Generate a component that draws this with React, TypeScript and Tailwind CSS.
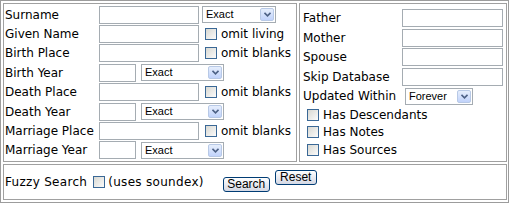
import React from 'react';

const font = { fontFamily: '"DejaVu Sans", Verdana, sans-serif' };
const smallFont = { fontFamily: '"Liberation Sans", Tahoma, Arial, sans-serif' };

function TextBox(props: { width: number }) {
  return (
    <div
      className="h-[18px] shrink-0 border border-[#a5acb2] bg-white"
      style={{ width: props.width }}
    />
  );
}

function Chevron() {
  return (
    <svg width="7" height="5" viewBox="0 0 7 5">
      <path d="M0.5 0.8 L3.5 3.8 L6.5 0.8" fill="none" stroke="#4d6185" strokeWidth="1.6" />
    </svg>
  );
}

function Dropdown(props: { width: number; value: string }) {
  return (
    <div
      className="flex h-[17px] shrink-0 items-center border border-[#a5acb2] bg-white"
      style={{ width: props.width }}
    >
      <div className="flex-1 truncate pl-[3px] text-[11px] leading-none text-black" style={smallFont}>
        {props.value}
      </div>
      <div className="mr-[1px] flex h-[13px] w-[14px] items-center justify-center rounded-[2px] border border-[#b8c9e6] bg-gradient-to-b from-[#e6eefc] to-[#c1d3fb]">
        <Chevron />
      </div>
    </div>
  );
}

function CheckBox() {
  return (
    <span className="inline-block h-[12px] w-[12px] shrink-0 border border-[#3a6896] bg-gradient-to-br from-[#d8d8d2] to-[#fbfbfb]" />
  );
}

function Check(props: { label: string }) {
  return (
    <div className="ml-[6px] flex items-center gap-[4px]">
      <CheckBox />
      <span className="text-[12px] text-black" style={font}>{props.label}</span>
    </div>
  );
}

function XpButton(props: { label: string; className?: string }) {
  return (
    <div
      className={`flex h-[15px] items-center justify-center rounded-[3px] border border-[#003c74] bg-gradient-to-b from-white to-[#d4d8e4] text-[12px] leading-none text-black ${props.className ?? ''}`}
      style={smallFont}
    >
      {props.label}
    </div>
  );
}

type LeftRow = { label: string; kind: 'select' | 'check' | 'year'; check?: string };

const leftRows: LeftRow[] = [
  { label: 'Surname', kind: 'select' },
  { label: 'Given Name', kind: 'check', check: 'omit living' },
  { label: 'Birth Place', kind: 'check', check: 'omit blanks' },
  { label: 'Birth Year', kind: 'year' },
  { label: 'Death Place', kind: 'check', check: 'omit blanks' },
  { label: 'Death Year', kind: 'year' },
  { label: 'Marriage Place', kind: 'check', check: 'omit blanks' },
  { label: 'Marriage Year', kind: 'year' },
];

const rightFields = ['Father', 'Mother', 'Spouse', 'Skip Database'];
const rightChecks = ['Has Descendants', 'Has Notes', 'Has Sources'];

export default function App() {
  return (
    <div className="h-[203px] w-[509px] bg-white text-black" style={font}>
      <div className="flex h-full w-full flex-col gap-[2px] border border-[#9c9c9c] p-[1px] pt-[2px] pl-[2px]">
        <div className="flex h-[159px] gap-[2px]">
          {/* left cell */}
          <div className="flex w-[294px] flex-col justify-center border border-[#a0a0a0] py-[1px]">
            {leftRows.map(row => (
              <div key={row.label} className="flex h-[19.5px] items-center">
                <div className="w-[95px] shrink-0 pl-[1px] text-[12px] whitespace-nowrap">{row.label}</div>
                {row.kind === 'select' ? (
                  <>
                    <TextBox width={100} />
                    <div className="ml-[3px]"><Dropdown width={74} value="Exact" /></div>
                  </>
                ) : row.kind === 'check' ? (
                  <>
                    <TextBox width={100} />
                    <Check label={row.check ?? ''} />
                  </>
                ) : (
                  <>
                    <TextBox width={37} />
                    <div className="ml-[5px]"><Dropdown width={83} value="Exact" /></div>
                  </>
                )}
              </div>
            ))}
          </div>

          {/* right cell */}
          <div className="flex w-[208px] flex-col justify-center border border-[#a0a0a0] pt-[2px]">
            {rightFields.map(f => (
              <div key={f} className="flex h-[19.5px] items-center">
                <div className="w-[102px] shrink-0 pl-[3px] text-[12px] whitespace-nowrap">{f}</div>
                <TextBox width={101} />
              </div>
            ))}
            <div className="flex h-[19.5px] items-center">
              <div className="w-[105px] shrink-0 pl-[3px] text-[12px] whitespace-nowrap">Updated Within</div>
              <Dropdown width={68} value="Forever" />
            </div>
            {rightChecks.map(c => (
              <div key={c} className="flex h-[17.5px] items-center gap-[4px] pl-[7px]">
                <CheckBox />
                <span className="text-[12px]">{c}</span>
              </div>
            ))}
          </div>
        </div>

        {/* bottom cell */}
        <div className="flex h-[36px] w-[504px] items-center border border-[#a0a0a0] pl-[1px]">
          <span className="text-[12px] tracking-[0.3px]">Fuzzy Search</span>
          <span className="ml-[6px] flex"><CheckBox /></span>
          <span className="ml-[3px] text-[12px] tracking-[0.3px]">(uses soundex)</span>
          <XpButton label="Search" className="mt-[4px] ml-[19px] w-[47px]" />
          <XpButton label="Reset" className="mt-[-10px] ml-[5px] w-[42px]" />
        </div>
      </div>
    </div>
  );
}
